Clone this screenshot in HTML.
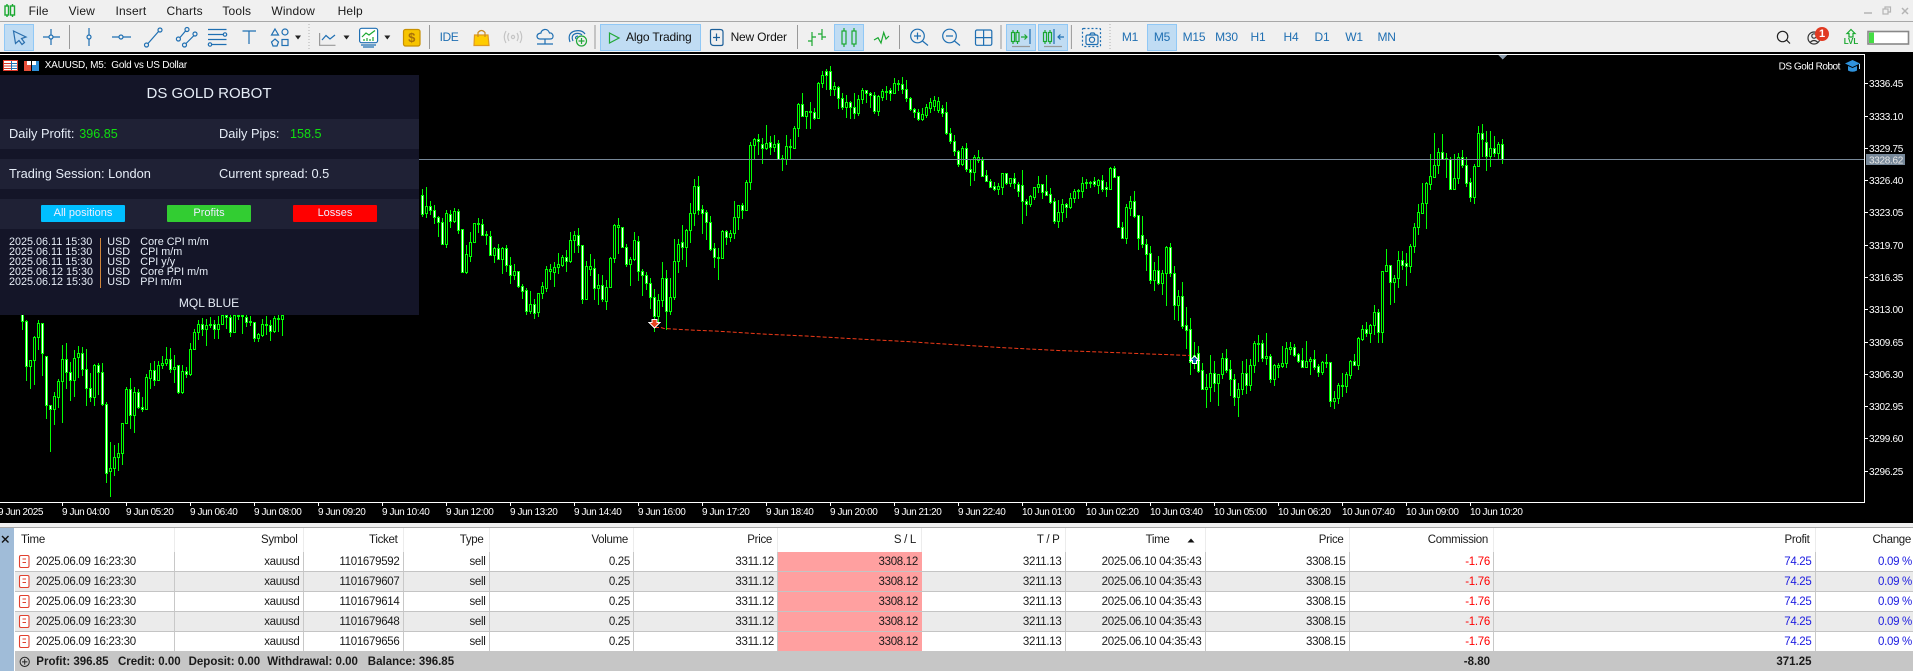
<!DOCTYPE html>
<html><head><meta charset="utf-8"><title>MT5</title>
<style>
html,body{margin:0;padding:0;width:1913px;height:671px;overflow:hidden;background:#f0f0f0;font-family:"Liberation Sans",sans-serif}
#r{position:relative;width:1913px;height:671px;overflow:hidden}
.a{position:absolute;white-space:nowrap}
.m{position:absolute;top:4px;font-size:12px;line-height:14px;color:#1a1a1a;letter-spacing:.15px}
.tb{position:absolute;top:30px;font-size:12px;line-height:14px;color:#1f6fb2;letter-spacing:-.2px;transform:translateX(-50%)}
.btn{position:absolute;top:24px;height:25px;background:#c0dcf3;border:1px solid #90c8f6}
#p{position:absolute;left:0;top:75px;width:419px;height:240px;background:#141528;color:#e6edf7}
#p .row{position:absolute;left:0;width:419px;height:30px;background:#1f2135}
#p .x{position:absolute;white-space:nowrap;font-size:12.8px;line-height:16px}
#p .g{color:#10e010}
#p .b{position:absolute;top:130px;width:84px;height:17px;line-height:17px;text-align:center;font-size:11px;color:#eef;border-radius:1px}
#p .n{position:absolute;white-space:nowrap;font-size:10.8px;line-height:10px}
table{position:absolute;left:15px;top:528px;width:1898px;border-collapse:collapse;table-layout:fixed;font-size:11.5px;letter-spacing:-.3px;color:#1a1a1a}
td,th{padding:0 3px 0 0;text-align:right;font-weight:normal;white-space:nowrap;overflow:hidden;border-right:1px solid #c8c8c8}
th{height:24px;padding-right:5px;border-right:1px solid #ececec;background:#fff}
td{height:19px;border-bottom:1px solid #c4c4c4;background:#fff}
tr.e td{background:#ebebeb}
td.s{background:#ffa0a0!important;border-right:1px solid #ffa0a0}
td.i{text-align:left;padding-left:21px}
td.c{color:#f00}td.u{color:#1c1ce0}
tr:last-child td{border-bottom:0}
.f{position:absolute;top:655px;font-size:11.5px;line-height:14px;font-weight:bold;color:#1a1a1a;white-space:nowrap}
</style></head><body><div id="r">

<!-- top bars -->
<div class="a" style="left:0;top:21px;width:1913px;height:1px;background:#a8a8a8"></div>
<div class="m" style="left:28.6px">File</div>
<div class="m" style="left:68.6px">View</div>
<div class="m" style="left:115.5px">Insert</div>
<div class="m" style="left:166.5px">Charts</div>
<div class="m" style="left:222.4px">Tools</div>
<div class="m" style="left:271.4px">Window</div>
<div class="m" style="left:337.6px">Help</div>

<div class="btn" style="left:4px;width:28px"></div>
<div class="btn" style="left:600px;width:99px"></div>
<div class="btn" style="left:834px;width:28px"></div>
<div class="btn" style="left:1006px;width:28px"></div>
<div class="btn" style="left:1038px;width:28px"></div>
<div class="btn" style="left:1147px;width:28px"></div>

<svg class="a" style="left:0;top:0" width="1913" height="52" viewBox="0 0 1913 52" fill="none" stroke="#1f6fb2" stroke-width="1.2">
<!-- logo -->
<g stroke="#1aa830" stroke-width="1.4"><path d="M7 4V17M12.5 4V17"/><rect x="5" y="6" width="3.5" height="9" fill="#f0f0f0"/><rect x="10.5" y="6" width="4" height="9" fill="#f0f0f0"/></g>
<!-- cursor -->
<path d="M13.5 31L26 37L21.5 38.5L24.5 42.5L22 44.5L19 40.5L15.5 43.5Z" stroke="#2a6fad"/>
<!-- crosshair -->
<path d="M43 37H49M53 37H60M51 29V35M51 39V45"/><circle cx="51" cy="37" r="2"/>
<path d="M89 28V35M89 39V46"/><circle cx="89" cy="37" r="2"/>
<path d="M112 37H119M123 37H131"/><circle cx="121" cy="37" r="2"/>
<path d="M148 43.5L158.5 31.5"/><circle cx="146.5" cy="45" r="2"/><circle cx="160" cy="30" r="2"/>
<path d="M180 37.5L185.5 31M186 43.5L194 35.5"/><circle cx="178.4" cy="39" r="2"/><circle cx="187" cy="29.5" r="2"/><circle cx="184.5" cy="45" r="2"/><circle cx="195" cy="34" r="2"/>
<path d="M208 29.5H226.5M208 34.5H223M208 39.5H226.5M212 44.5H226.5"/><circle cx="225" cy="34.5" r="1.7"/><circle cx="210" cy="44.5" r="1.7"/>
<path d="M242.5 31H256M249 31V44"/>
<path d="M275 29L278.5 35H271.5Z"/><circle cx="285" cy="32" r="3"/><path d="M275 39L278.5 42L277 46H273L271.5 42Z"/><rect x="282" y="39.5" width="6" height="6"/>
<path d="M295 35.5H301L298 39.5Z" fill="#222" stroke="none"/>
<path d="M309 24V50" stroke="#bbb" stroke-dasharray="1 2"/>
<path d="M319.6 33V45.3H335.5" stroke="#999"/><path d="M322 40L326 35.5L330 39L335 35"/>
<path d="M343.5 35.5H349.5L346.5 39.5Z" fill="#222" stroke="none"/>
<rect x="359.6" y="28.3" width="18" height="14.4" rx="2" fill="#fff"/><path d="M362 37L366 33L369 35L375 30.5" stroke="#1aa830"/><path d="M364 41V39M367 41V38M370 41V39M373 41V37" stroke="#1aa830"/><path d="M361 45H376M363 47H374"/>
<path d="M384.3 35.5H390.3L387.3 39.5Z" fill="#222" stroke="none"/>
<rect x="403.5" y="29.5" width="16.5" height="16.5" rx="2" fill="#f7c400" stroke="#c89000"/>
<path d="M429.5 25V49M69.5 25V49M595 25V49M797.5 25V49M899.5 25V49M1001 25V49M1071.4 25V49" stroke="#999" stroke-width="1"/>
<path d="M474.5 35H488L489 45.5H474Z" fill="#fc0" stroke="#e09a20"/><path d="M478 37V32.5Q481.5 28.5 485 32.5V37" stroke="#c88a20"/>
<g stroke="#c4c4c4"><circle cx="513" cy="37" r="1.6"/><path d="M509 33Q506.5 37 509 41M517 33Q519.5 37 517 41M506 31Q502.5 37 506 43M520 31Q523.5 37 520 43"/></g>
<path d="M540 39H550Q553.5 39 553 35.5Q552 32.5 549.5 33Q548 29 544.5 29.5Q541 30.5 541 33Q537 33.5 537 36.5Q537.5 39 540 39ZM545 39V44M537 44H553"/>
<path d="M570 42Q567 33 575 31Q582 29.5 585 34M573 41Q570.5 35 576 33.5Q580 33 582 35M576 39Q574.5 36.5 578 36"/><circle cx="581.5" cy="41" r="5" stroke="#22a838" fill="#f0f0f0"/><path d="M581.5 38V44M578.5 41H584.5" stroke="#22a838"/>
<path d="M609.5 33L619 38L609.5 43Z" stroke="#22a838"/>
<path d="M710.5 30.5Q710.5 29.5 712 29.5H720Q723 29.5 723 32V44Q723 45.5 721 45.5H714Q710.5 45.5 710.5 42Z" stroke="#1c5f99"/><path d="M716.5 33.5V41M713 37.5H720" stroke="#1c5f99"/>
<g stroke="#1aa830"><path d="M812 32V46M812 41H808M812 37H816M822 29V40M822 34H818M822 37H826"/>
<path d="M844 28V47M854 28V47"/><rect x="842" y="31" width="4" height="13" fill="#c0dcf3"/><rect x="852" y="31" width="4" height="13" fill="#c0dcf3"/>
<path d="M874 40L878 37.7L881 43L883.7 32.5L886 39L889 36"/></g>
<circle cx="917.5" cy="36" r="6.8"/><path d="M922.5 41L928 45.5M914 36H921M917.5 32.5V39.5"/>
<circle cx="949.5" cy="36" r="6.8"/><path d="M954.5 41L960 45.5M946 36H953"/>
<rect x="975.5" y="30" width="16.3" height="15.3" rx="1.5"/><path d="M983.6 30V45.3M975.5 37.6H991.8"/>
<g stroke="#1aa830"><path d="M1013 30V44M1017.5 30V44"/><rect x="1011.5" y="32.5" width="3" height="9" fill="#c0dcf3" /><rect x="1016" y="32.5" width="3" height="9" fill="#c0dcf3"/><path d="M1021 37H1027M1024.5 34.5L1027 37L1024.5 39.5"/>
<path d="M1045 30V44M1050 30V44"/><rect x="1043.5" y="32.5" width="3" height="9" fill="#c0dcf3"/><rect x="1048.5" y="32.5" width="3" height="9" fill="#c0dcf3"/></g>
<path d="M1030 29V44M1054 29V44M1058 37H1064M1060.5 34.5L1058 37L1060.5 39.5"/>
<path d="M1012 46.5H1030M1044 46.5H1062" stroke="#999"/>
<rect x="1082.5" y="28.5" width="18" height="18" rx="1" stroke-dasharray="2 2"/><rect x="1086" y="35" width="12" height="9.5" rx="1.5" fill="#f0f0f0"/><circle cx="1092" cy="39.7" r="2.6"/><path d="M1089.5 35L1091 33H1094L1095.5 35"/>
<path d="M1110 24V50" stroke="#bbb" stroke-dasharray="1 2"/>
<!-- right -->
<g stroke="#222"><circle cx="1782.6" cy="36.5" r="5.2"/><path d="M1786.5 40L1790 43.5"/></g>
<g stroke="#333"><circle cx="1814" cy="38" r="6"/><circle cx="1814" cy="36" r="2.2"/><path d="M1810 42.5Q1814 38.5 1818 42.5"/></g>
<circle cx="1822" cy="34" r="7" fill="#e13a22" stroke="none"/>
<path d="M1851 29.5L1855 33.5H1853V37H1849V33.5H1847Z" stroke="#1aa830" fill="#e8f8ea"/>
<rect x="1868" y="31.5" width="40.5" height="12.5" fill="#fff" stroke="#888" stroke-width="1.6"/><rect x="1869" y="32.5" width="5" height="10.5" fill="#44dd44" stroke="none"/>
<g stroke="#b4b4b4" stroke-width="1.5"><path d="M1864 13H1872"/><rect x="1883" y="9" width="5" height="5" stroke-width="1.2"/><path d="M1885 9V7H1890.5V12H1888" stroke-width="1.2"/><path d="M1902 8L1908 14M1908 8L1902 14"/></g>
</svg>
<div class="a" style="left:403.5px;top:29px;width:16.5px;text-align:center;font-size:13px;line-height:17px;font-weight:bold;color:#a8700a">$</div>
<div class="tb" style="left:449px;letter-spacing:-.4px">IDE</div>
<div class="a" style="left:626px;top:30px;font-size:12px;line-height:14px;color:#111;letter-spacing:-.15px">Algo Trading</div>
<div class="a" style="left:730.6px;top:30px;font-size:12px;line-height:14px;color:#111;letter-spacing:-.2px">New Order</div>
<div class="tb" style="left:1130px">M1</div><div class="tb" style="left:1162px">M5</div><div class="tb" style="left:1194px">M15</div><div class="tb" style="left:1226.5px">M30</div><div class="tb" style="left:1258px">H1</div><div class="tb" style="left:1291px">H4</div><div class="tb" style="left:1322px">D1</div><div class="tb" style="left:1354px">W1</div><div class="tb" style="left:1386.6px">MN</div>
<div class="a" style="left:1818px;top:27px;width:8px;text-align:center;font-size:11px;line-height:14px;font-weight:bold;color:#fff">1</div>
<div class="a" style="left:1842px;top:37px;width:18px;text-align:center;font-size:8px;line-height:10px;font-weight:bold;color:#1aa830">LVL</div>

<!-- chart -->
<div class="a" style="left:0;top:52px;width:1913px;height:471px;background:#000"></div>
<svg id="c" class="a" style="left:0;top:0" width="1913" height="523" viewBox="0 0 1913 523" shape-rendering="crispEdges" font-family="'Liberation Sans',sans-serif" font-size="10" fill="#fff">
<path d="M0 54.5H1864.5V502.5H0" fill="none" stroke="#fff" stroke-width="1"/>
<g id="g"></g>
<path d="M0 159.5H1864" stroke="#778899" fill="none"/>
<path d="M655 327.5H661L664 328.5L690 330L714 331L762 334L806 336L858 339L906 341.5L960 345L1000 347.5L1058 350.5L1100 352L1150 354L1190 355.5" fill="none" stroke="#f03a18" stroke-dasharray="4 2" shape-rendering="auto"/>
<path d="M652 319.5h5v3h3l-5.5 5.5l-5.5 -5.5h3z" fill="#e8431f" stroke="#fff"/>
<path d="M1192.5 363.5v-3h-2.5l4.5 -4.5l4.5 4.5h-2.5v3z" fill="#0a5fa5" stroke="#fff"/>
<path d="M1498 55h9l-4.5 4.5z" fill="#8898a8"/>
<path id="tk" d="" stroke="#fff" fill="none"/>
<g letter-spacing="-.45">
<text x="-2" y="515">9 Jun 2025</text><text x="62" y="515">9 Jun 04:00</text><text x="126" y="515">9 Jun 05:20</text><text x="190" y="515">9 Jun 06:40</text><text x="254" y="515">9 Jun 08:00</text><text x="318" y="515">9 Jun 09:20</text><text x="382" y="515">9 Jun 10:40</text><text x="446" y="515">9 Jun 12:00</text><text x="510" y="515">9 Jun 13:20</text><text x="574" y="515">9 Jun 14:40</text><text x="638" y="515">9 Jun 16:00</text><text x="702" y="515">9 Jun 17:20</text><text x="766" y="515">9 Jun 18:40</text><text x="830" y="515">9 Jun 20:00</text><text x="894" y="515">9 Jun 21:20</text><text x="958" y="515">9 Jun 22:40</text><text x="1022" y="515">10 Jun 01:00</text><text x="1086" y="515">10 Jun 02:20</text><text x="1150" y="515">10 Jun 03:40</text><text x="1214" y="515">10 Jun 05:00</text><text x="1278" y="515">10 Jun 06:20</text><text x="1342" y="515">10 Jun 07:40</text><text x="1406" y="515">10 Jun 09:00</text><text x="1470" y="515">10 Jun 10:20</text>
</g>
<g letter-spacing="-.3">
<text x="1869" y="87">3336.45</text><text x="1869" y="120">3333.10</text><text x="1869" y="152">3329.75</text><text x="1869" y="184">3326.40</text><text x="1869" y="216">3323.05</text><text x="1869" y="249">3319.70</text><text x="1869" y="281">3316.35</text><text x="1869" y="313">3313.00</text><text x="1869" y="346">3309.65</text><text x="1869" y="378">3306.30</text><text x="1869" y="410">3302.95</text><text x="1869" y="442">3299.60</text><text x="1869" y="475">3296.25</text>
<rect x="1866" y="154" width="39" height="11" fill="#778899"/><text x="1869" y="163.5" fill="#e8e8e8">3328.62</text>
</g>
<text x="1778.6" y="69.5" letter-spacing="-.45">DS Gold Robot</text>
</svg>
<svg class="a" style="left:0;top:55px" width="44" height="20" viewBox="0 0 44 20" shape-rendering="crispEdges">
<rect x="3.5" y="5.5" width="14" height="10" fill="#fff" stroke="#e03a2a"/><path d="M4 8.5H11M4 11H11M4 13.5H11" stroke="#e03a2a"/><path d="M11.5 6V15" stroke="#1c6fb5"/><path d="M12 8.5H17M12 11H17M12 13.5H17" stroke="#1c6fb5"/>
<path d="M24 6H31V16H24Z" fill="#e8503a"/><path d="M27 6H31V10H27Z" fill="#fff"/><path d="M32 6H39V16H32Z" fill="#2f8fd8"/><path d="M32 6H36V10H32Z" fill="#fff"/>
</svg>
<div class="a" style="left:44.7px;top:59px;font-size:10px;line-height:14px;color:#fff;letter-spacing:-.22px">XAUUSD, M5:&nbsp; Gold vs US Dollar</div>
<svg class="a" style="left:1844px;top:58px" width="18" height="16" viewBox="0 0 18 16"><path d="M1 5.5L8.5 2L16 5.5L8.5 9Z" fill="#2f93dd"/><path d="M4 8V12.5Q8.5 15 13 12.5V8L8.5 10Z" fill="#2f93dd"/><path d="M15.5 6V11" stroke="#9fd0f0"/></svg>

<!-- panel -->
<div id="p">
<div class="a" style="left:0;top:10px;width:418px;text-align:center;font-size:15px;line-height:18px">DS GOLD ROBOT</div>
<div class="row" style="top:44px"></div><div class="row" style="top:84px"></div><div class="row" style="top:124px"></div>
<div class="x" style="left:9px;top:51px">Daily Profit:</div><div class="x g" style="left:79.3px;top:51px;font-size:12.6px">396.85</div>
<div class="x" style="left:219px;top:51px">Daily Pips:</div><div class="x g" style="left:290px;top:51px;font-size:12.6px">158.5</div>
<div class="x" style="left:9px;top:91px">Trading Session: London</div>
<div class="x" style="left:219px;top:91px">Current spread: 0.5</div>
<div class="b" style="left:41px;background:#00bfff">All positions</div>
<div class="b" style="left:167px;background:#32cd32">Profits</div>
<div class="b" style="left:293px;background:#ff0000">Losses</div>
<div class="a" style="left:100px;top:163px;width:1px;height:50px;background:#d2873c"></div>
<div class="n" style="left:9px;top:162px">2025.06.11 15:30</div><div class="n" style="left:107.3px;top:162px">USD</div><div class="n" style="left:140.3px;top:162px">Core CPI m/m</div>
<div class="n" style="left:9px;top:172px">2025.06.11 15:30</div><div class="n" style="left:107.3px;top:172px">USD</div><div class="n" style="left:140.3px;top:172px">CPI m/m</div>
<div class="n" style="left:9px;top:182px">2025.06.11 15:30</div><div class="n" style="left:107.3px;top:182px">USD</div><div class="n" style="left:140.3px;top:182px">CPI y/y</div>
<div class="n" style="left:9px;top:192px">2025.06.12 15:30</div><div class="n" style="left:107.3px;top:192px">USD</div><div class="n" style="left:140.3px;top:192px">Core PPI m/m</div>
<div class="n" style="left:9px;top:202px">2025.06.12 15:30</div><div class="n" style="left:107.3px;top:202px">USD</div><div class="n" style="left:140.3px;top:202px">PPI m/m</div>
<div class="a" style="left:0;top:221px;width:418px;text-align:center;font-size:12px;line-height:15px">MQL BLUE</div>
</div>

<!-- terminal -->
<div class="a" style="left:0;top:527px;width:1913px;height:1px;background:#a8a8a8"></div>
<div class="a" style="left:0;top:528px;width:14px;height:143px;background:#a0bcd8"></div>
<div class="a" style="left:14px;top:528px;width:1px;height:143px;background:#fff"></div>
<svg class="a" style="left:1px;top:535px" width="9" height="9" viewBox="0 0 9 9"><path d="M1 1L7.5 7.5M7.5 1L1 7.5" stroke="#111" stroke-width="1.4"/></svg>
<table>
<colgroup><col style="width:159px"><col style="width:129px"><col style="width:100px"><col style="width:86px"><col style="width:144.5px"><col style="width:144px"><col style="width:144px"><col style="width:143.5px"><col style="width:140px"><col style="width:144px"><col style="width:144.5px"><col style="width:321.5px"><col style="width:98px"></colgroup>
<tr><th style="text-align:left;padding-left:6px">Time</th><th>Symbol</th><th>Ticket</th><th>Type</th><th>Volume</th><th>Price</th><th>S / L</th><th>T / P</th><th style="padding-right:35px">Time</th><th>Price</th><th>Commission</th><th>Profit</th><th style="padding-right:2px;border-right:0">Change</th></tr>
<tr><td class="i">2025.06.09 16:23:30</td><td>xauusd</td><td>1101679592</td><td>sell</td><td>0.25</td><td>3311.12</td><td class="s">3308.12</td><td>3211.13</td><td>2025.06.10 04:35:43</td><td>3308.15</td><td class="c">-1.76</td><td class="u">74.25</td><td class="u" style="padding-right:1px;border-right:0">0.09 %</td></tr>
<tr class="e"><td class="i">2025.06.09 16:23:30</td><td>xauusd</td><td>1101679607</td><td>sell</td><td>0.25</td><td>3311.12</td><td class="s">3308.12</td><td>3211.13</td><td>2025.06.10 04:35:43</td><td>3308.15</td><td class="c">-1.76</td><td class="u">74.25</td><td class="u" style="padding-right:1px;border-right:0">0.09 %</td></tr>
<tr><td class="i">2025.06.09 16:23:30</td><td>xauusd</td><td>1101679614</td><td>sell</td><td>0.25</td><td>3311.12</td><td class="s">3308.12</td><td>3211.13</td><td>2025.06.10 04:35:43</td><td>3308.15</td><td class="c">-1.76</td><td class="u">74.25</td><td class="u" style="padding-right:1px;border-right:0">0.09 %</td></tr>
<tr class="e"><td class="i">2025.06.09 16:23:30</td><td>xauusd</td><td>1101679648</td><td>sell</td><td>0.25</td><td>3311.12</td><td class="s">3308.12</td><td>3211.13</td><td>2025.06.10 04:35:43</td><td>3308.15</td><td class="c">-1.76</td><td class="u">74.25</td><td class="u" style="padding-right:1px;border-right:0">0.09 %</td></tr>
<tr><td class="i">2025.06.09 16:23:30</td><td>xauusd</td><td>1101679656</td><td>sell</td><td>0.25</td><td>3311.12</td><td class="s">3308.12</td><td>3211.13</td><td>2025.06.10 04:35:43</td><td>3308.15</td><td class="c">-1.76</td><td class="u">74.25</td><td class="u" style="padding-right:1px;border-right:0">0.09 %</td></tr>
</table>
<svg class="a" style="left:15px;top:527px" width="1200" height="124" viewBox="0 0 1200 124" fill="none" stroke="#e0402e" stroke-width="1.1">
<g><rect x="4.5" y="28.5" width="9.5" height="12" rx="1.5" fill="#fff"/><path d="M7.5 32H11M7.5 35.5H11"/></g>
<g transform="translate(0,20)"><rect x="4.5" y="28.5" width="9.5" height="12" rx="1.5" fill="#fff"/><path d="M7.5 32H11M7.5 35.5H11"/></g>
<g transform="translate(0,40)"><rect x="4.5" y="28.5" width="9.5" height="12" rx="1.5" fill="#fff"/><path d="M7.5 32H11M7.5 35.5H11"/></g>
<g transform="translate(0,60)"><rect x="4.5" y="28.5" width="9.5" height="12" rx="1.5" fill="#fff"/><path d="M7.5 32H11M7.5 35.5H11"/></g>
<g transform="translate(0,80)"><rect x="4.5" y="28.5" width="9.5" height="12" rx="1.5" fill="#fff"/><path d="M7.5 32H11M7.5 35.5H11"/></g>
<path d="M1172.5 15.5H1179.5L1176 11.5Z" fill="#111" stroke="none"/>
</svg>
<div class="a" style="left:15px;top:651px;width:1898px;height:20px;background:#c6c6c6"></div>
<svg class="a" style="left:19px;top:656px" width="12" height="12" viewBox="0 0 12 12" fill="none" stroke="#222"><circle cx="5.7" cy="5.9" r="4.6"/><path d="M5.7 3.2V8.6M3 5.9H8.4"/></svg>
<div class="f" style="left:36.3px">Profit: 396.85</div>
<div class="f" style="left:118px">Credit: 0.00</div>
<div class="f" style="left:188.6px">Deposit: 0.00</div>
<div class="f" style="left:267.3px">Withdrawal: 0.00</div>
<div class="f" style="left:367.8px">Balance: 396.85</div>
<div class="f" style="right:423px">-8.80</div>
<div class="f" style="right:101.5px">371.25</div>
</div>
<script>
var A="*300,300,321,329 *320,321,366,380 360,360,366,388 336,337,360,384 320,323,337,349 *323,323,353,375 *356,356,405,418 *405,405,409,451 392,396,409,424 379,381,397,407 345,359,381,422 *343,359,372,388 *362,372,380,400 350,358,380,396 346,353,357,377 *347,353,369,375 *349,369,388,405 *373,388,397,401 364,365,397,405 *363,365,372,394 *363,372,404,405 *402,404,473,482 442,468,471,496 445,457,468,475 443,453,457,470 423,423,453,464 387,389,423,423 *378,389,415,428 387,392,415,432 *389,392,407,408 *397,407,409,411 374,377,409,409 363,370,378,388 *361,370,380,385 361,365,380,380 356,363,365,368 347,359,363,365 *348,359,369,372 355,367,369,382 *365,365,392,393 365,371,392,393 *367,371,374,377 343,349,374,375 329,332,349,349 320,324,332,339 *318,324,329,335 319,325,329,345 317,324,325,327 *320,324,329,338 316,324,329,338 310,315,324,324 *310,315,317,328 *315,317,332,336 310,315,332,332 300,315,316,319 305,315,316,333 *312,317,322,326 316,321,322,325 *322,322,338,341 333,334,338,341 319,324,335,336 316,324,325,334 *320,325,331,340 316,318,331,332 315,318,319,331 310,315,319,335";
var B="*189,195,214,216 187,206,213,217 *201,206,210,214 *205,210,217,223 *216,217,222,236 *218,222,244,244 210,213,244,247 *210,214,221,227 208,211,221,222 *209,211,230,233 *229,229,272,272 245,254,272,273 232,242,256,261 223,223,242,242 218,223,224,232 *219,224,235,235 231,234,235,244 *231,236,255,255 247,248,255,262 *244,248,259,259 247,248,259,273 *245,248,265,271 *257,265,275,283 264,271,275,279 *271,271,286,287 *284,286,291,298 *288,290,311,314 291,304,311,313 *299,304,313,318 293,293,312,316 282,286,293,298 266,269,288,291 264,269,271,279 262,267,272,286 253,264,267,273 255,257,265,266 *250,257,261,271 232,240,261,262 231,235,240,252 *228,235,245,252 *245,245,299,303 261,266,299,299 254,266,269,275 *259,268,288,299 274,285,288,304 *275,285,299,301 280,287,301,309 257,258,287,287 224,225,258,262 218,225,227,253 *227,227,247,247 *244,247,264,266 257,259,264,285 232,240,259,260 *236,241,271,280 *269,271,275,295 *272,275,283,289 *278,283,297,308 *289,297,316,331 294,300,316,322 262,278,300,306 *270,278,311,329 278,297,311,314 239,261,297,299 239,244,261,272 *225,242,247,259 229,230,247,266 203,213,230,242 179,186,213,225 *176,186,210,214 *205,209,213,233 *210,212,222,239 *216,222,249,250 *243,248,257,267 248,257,258,279 230,231,258,258 *230,231,237,244 230,233,237,241 201,217,233,238 205,205,217,229 *203,205,210,218 180,182,210,210 142,145,182,189 138,139,145,159 *134,139,141,154 *138,144,148,163 125,143,148,149 *136,142,147,154 135,144,147,151 *140,143,159,159 155,158,159,170 135,146,159,164 139,146,147,159 126,128,148,148 103,104,128,136 *93,104,116,116 111,111,116,128 102,111,112,128 *108,112,118,119 82,83,118,118 71,75,83,87 *69,71,75,89 *66,71,89,95 82,86,89,95 *86,87,98,108 *93,98,107,109 95,102,107,117 *101,102,107,118 *93,107,113,118 95,99,113,115 88,90,99,103 *90,90,93,102 *92,93,95,107 *92,95,111,113 95,96,111,115 89,91,97,100 86,91,92,99 *88,90,93,100 78,83,93,93 80,83,84,90 *77,84,89,93 *80,89,98,101 *97,98,109,110 *108,109,112,117 *109,112,119,120 108,114,119,120 104,107,115,117 98,102,108,112 96,100,106,110 97,101,110,112 *105,108,113,116 *102,112,133,134 *128,133,141,143 *135,141,151,155 *150,151,164,166 146,148,164,165 *143,148,169,171 *160,169,172,185 155,157,172,180 150,157,160,162 *157,160,176,176 *170,175,181,181 *179,181,187,187 *182,186,189,190 183,186,189,194 173,173,187,194 *173,173,183,184 178,178,183,186 *173,178,183,188 *182,184,191,196 *170,185,201,223 *199,201,204,215 195,196,204,206 187,187,197,199 176,184,187,192 *184,184,192,198 *175,191,195,195 *188,194,202,203 *198,201,221,223 200,212,221,227 199,204,212,221 *203,204,207,217 193,198,207,208 189,191,198,202 189,190,191,198 177,183,191,197 179,182,183,188 181,182,183,187 *177,181,184,186 179,180,185,193 *175,180,189,191 *182,187,189,196 167,168,189,189 *166,168,177,177 *176,176,227,227 *222,227,238,238 204,207,238,243 196,201,208,215 *191,201,216,217 *215,215,238,249 *216,235,244,247 *239,244,254,270 *246,253,280,283 262,270,280,290 *256,270,283,284 270,273,283,294 246,247,273,305 *243,247,273,276 *266,273,305,319 290,296,305,320 *282,296,326,328 *307,325,330,348 *318,329,362,374 342,355,358,368 *346,353,371,372 *363,370,389,389 374,387,389,407 355,373,387,401 *361,373,383,391 374,374,383,405 353,358,374,378 *349,358,370,372 *360,369,379,395 *374,379,397,405 383,389,397,416 361,373,389,394 *359,373,385,393 359,365,385,390 341,343,365,372 335,343,344,361 *340,343,358,361 333,356,358,364 *354,356,379,382 364,365,379,385 363,365,367,377 346,363,366,367 342,348,363,367 342,347,349,354 *344,347,355,356 *353,354,361,362 *348,360,367,367 341,361,367,367 357,359,361,374 *350,359,367,369 *364,366,372,376 361,362,372,374 354,362,363,367 *362,362,401,406 391,398,401,408 383,385,398,403 373,385,386,396 372,374,386,392 360,361,375,378 *354,361,365,365 337,338,365,369 325,329,339,340 *322,329,333,336 324,325,333,342 305,312,325,334 *309,312,332,342 271,271,332,342 249,265,271,271 *265,265,282,304 275,278,282,302 251,260,278,287 *251,260,265,269 *253,263,266,285 244,246,266,272 223,227,246,252 204,212,227,234 183,203,213,213 182,183,203,228 154,176,184,189 133,165,177,177 148,152,165,173 *134,152,159,159 153,158,159,177 *157,159,189,189 154,178,189,189 153,157,178,183 *150,157,165,167 *157,165,183,186 *178,182,197,201 164,166,197,203 126,133,166,166 *124,133,139,156 *131,142,156,170 131,148,156,166 *136,148,153,156 142,144,153,158 *139,144,159,163";
var w="",b="",c="",k="";
function add(s,x0){s.split(" ").forEach(function(e,i){var f=e[0]=="*",p=e.replace("*","").split(",").map(Number),x=x0+4*i,h=p[0],t=p[1],o=p[2],l=p[3];
w+="M"+x+" "+h+"h1V"+(l+1)+"h-1z";var bh=Math.max(o-t+1,2);b+="M"+(x-1)+" "+t+"h3v"+bh+"h-3z";
if(bh>2){var r="M"+x+" "+(t+1)+"h1v"+(bh-2)+"h-1z";if(f)c+=r;else k+=r;}});}
add(A,22);add(B,422);
document.getElementById("g").innerHTML='<path d="'+w+b+'" fill="#00ff00"/><path d="'+c+'" fill="#fff"/><path d="'+k+'" fill="#000"/>';
var d="";for(var x=62;x<=1470;x+=64)d+="M"+(x+.5)+" 502V506";[83,116,148,180,212,245,277,309,342,374,406,438,471].forEach(function(y){d+="M1864 "+(y+.5)+"H1868"});
document.getElementById("tk").setAttribute("d",d);
</script>
</body></html>
